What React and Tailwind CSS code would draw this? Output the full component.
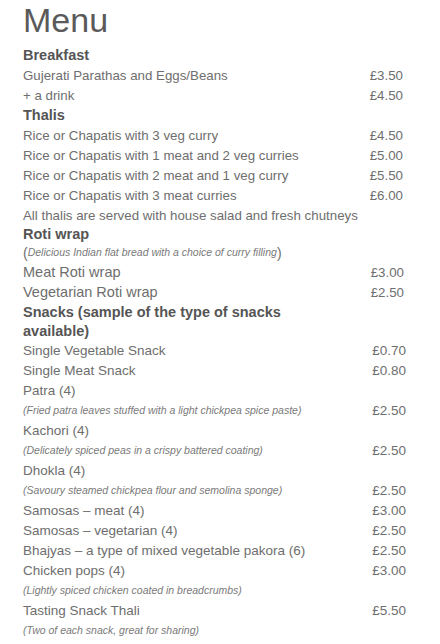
const f = { fontFamily: '"Liberation Sans", Arial, sans-serif' };

function Row({ name, price, size = "text-[13.3px]", pr = "pr-[37px]", h = "h-[20px]" }) {
  return (
    <div className={`flex ${h} items-center justify-between ${size} ${pr}`}>
      <span>{name}</span>
      {price && <span>{price}</span>}
    </div>
  );
}

function Note({ text, price }) {
  return (
    <div className="flex h-[20px] items-center justify-between pr-[34px]">
      <span className="text-[10.5px] italic text-[#7a7a7a]">{text}</span>
      {price && <span className="text-[13.5px]">{price}</span>}
    </div>
  );
}

function Heading({ children, h = "h-[20px]" }) {
  return (
    <div className={`flex ${h} items-center text-[14.5px] font-bold text-[#555]`}>{children}</div>
  );
}

export default function App() {
  return (
    <div style={f} className="w-[440px] h-[644px] bg-white overflow-hidden pl-[23px] text-[#6e6e6e]">
      <h1 className="text-[34px] leading-[38px] pt-[1px] mb-[7px] text-[#5a5a5a]">Menu</h1>
      <Heading>Breakfast</Heading>
      <Row name="Gujerati Parathas and Eggs/Beans" price="£3.50" />
      <Row name="+ a drink" price="£4.50" />
      <Heading>Thalis</Heading>
      <Row name="Rice or Chapatis with 3 veg curry" price="£4.50" />
      <Row name="Rice or Chapatis with 1 meat and 2 veg curries" price="£5.00" />
      <Row name="Rice or Chapatis with 2 meat and 1 veg curry" price="£5.50" />
      <Row name="Rice or Chapatis with 3 meat curries" price="£6.00" />
      <Row name="All thalis are served with house salad and fresh chutneys" />
      <Heading h="h-[17px]">Roti wrap</Heading>
      <div className="flex h-[20px] items-center text-[14px]">
        <span>(</span>
        <span className="text-[10.5px] italic text-[#7a7a7a]">
          Delicious Indian flat bread with a choice of curry filling
        </span>
        <span>)</span>
      </div>
      <Row name="Meat Roti wrap" price={<span className="text-[13.3px]">£3.00</span>} size="text-[14.5px]" pr="pr-[36px]" />
      <Row name="Vegetarian Roti wrap" price={<span className="text-[13.3px]">£2.50</span>} size="text-[14.5px]" pr="pr-[36px]" />
      <div className="w-[275px] text-[14.5px] font-bold leading-[19px] text-[#555]">
        Snacks (sample of the type of snacks available)
      </div>
      <Row name="Single Vegetable Snack" price="£0.70" size="text-[13.5px]" pr="pr-[34px]" />
      <Row name="Single Meat Snack" price="£0.80" size="text-[13.5px]" pr="pr-[34px]" />
      <Row name="Patra (4)" size="text-[13.5px]" />
      <Note text="(Fried patra leaves stuffed with a light chickpea spice paste)" price="£2.50" />
      <Row name="Kachori (4)" size="text-[13.5px]" />
      <Note text="(Delicately spiced peas in a crispy battered coating)" price="£2.50" />
      <Row name="Dhokla (4)" size="text-[13.5px]" />
      <Note text="(Savoury steamed chickpea flour and semolina sponge)" price="£2.50" />
      <Row name="Samosas – meat (4)" price="£3.00" size="text-[13.5px]" pr="pr-[34px]" />
      <Row name="Samosas – vegetarian (4)" price="£2.50" size="text-[13.5px]" pr="pr-[34px]" />
      <Row name="Bhajyas – a type of mixed vegetable pakora (6)" price="£2.50" size="text-[13.5px]" pr="pr-[34px]" />
      <Row name="Chicken pops (4)" price="£3.00" size="text-[13.5px]" pr="pr-[34px]" />
      <Note text="(Lightly spiced chicken coated in breadcrumbs)" />
      <Row name="Tasting Snack Thali" price="£5.50" size="text-[13.5px]" pr="pr-[34px]" />
      <Note text="(Two of each snack, great for sharing)" />
    </div>
  );
}
